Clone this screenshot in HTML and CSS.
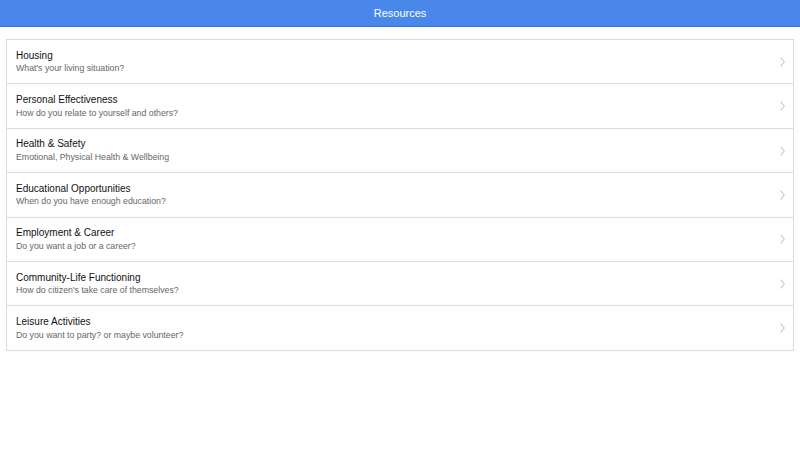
FILE: index.html
```html
<!DOCTYPE html>
<html>
<head>
<meta charset="utf-8">
<link rel="stylesheet" href="styles.css">
</head>
<body>
<header class="bar"><span class="bar-title">Resources</span></header>
<main class="content">
  <ul class="list">
    <li class="item"><div class="label"><h2>Housing</h2><p>What's your living situation?</p></div><svg class="chev" viewBox="0 0 5 10"><path d="M0.6 0.6 L4.3 5 L0.6 9.4" /></svg></li>
    <li class="item"><div class="label"><h2>Personal Effectiveness</h2><p>How do you relate to yourself and others?</p></div><svg class="chev" viewBox="0 0 5 10"><path d="M0.6 0.6 L4.3 5 L0.6 9.4" /></svg></li>
    <li class="item"><div class="label"><h2>Health &amp; Safety</h2><p>Emotional, Physical Health &amp; Wellbeing</p></div><svg class="chev" viewBox="0 0 5 10"><path d="M0.6 0.6 L4.3 5 L0.6 9.4" /></svg></li>
    <li class="item"><div class="label"><h2>Educational Opportunities</h2><p>When do you have enough education?</p></div><svg class="chev" viewBox="0 0 5 10"><path d="M0.6 0.6 L4.3 5 L0.6 9.4" /></svg></li>
    <li class="item"><div class="label"><h2>Employment &amp; Career</h2><p>Do you want a job or a career?</p></div><svg class="chev" viewBox="0 0 5 10"><path d="M0.6 0.6 L4.3 5 L0.6 9.4" /></svg></li>
    <li class="item"><div class="label"><h2>Community-Life Functioning</h2><p>How do citizen's take care of themselves?</p></div><svg class="chev" viewBox="0 0 5 10"><path d="M0.6 0.6 L4.3 5 L0.6 9.4" /></svg></li>
    <li class="item"><div class="label"><h2>Leisure Activities</h2><p>Do you want to party? or maybe volunteer?</p></div><svg class="chev" viewBox="0 0 5 10"><path d="M0.6 0.6 L4.3 5 L0.6 9.4" /></svg></li>
  </ul>
</main>
</body>
</html>
```

FILE: styles.css
```css
* { box-sizing: border-box; }
html, body {
  margin: 0;
  padding: 0;
  background: #fff;
  font-family: "Liberation Sans", Arial, sans-serif;
}
.bar {
  height: 27px;
  background: #4a87ea;
  border-bottom: 1px solid #3b74d6;
  display: flex;
  align-items: center;
  justify-content: center;
}
.bar-title {
  color: #fff;
  font-size: 11px;
  line-height: 1;
  margin-top: 1px;
}
.content {
  padding: 12px 6px;
}
.list {
  list-style: none;
  margin: 0;
  padding: 0;
  border: 1px solid #dcdcdc;
}
.item {
  display: flex;
  align-items: center;
  padding: 9.7px 8px 9.1px 9px;
  border-top: 1px solid #dcdcdc;
}
.item:first-child { border-top: none; }
.label { flex: 1; }
.label h2 {
  margin: 0;
  font-size: 10px;
  line-height: 12px;
  font-weight: normal;
  color: #111;
}
.label p {
  margin: 0.6px 0 0;
  font-size: 8.75px;
  line-height: 12px;
  color: #666;
}
.chev {
  width: 5px;
  height: 10px;
  fill: none;
  stroke: #c8c7cc;
  stroke-width: 1.1;
}
```
